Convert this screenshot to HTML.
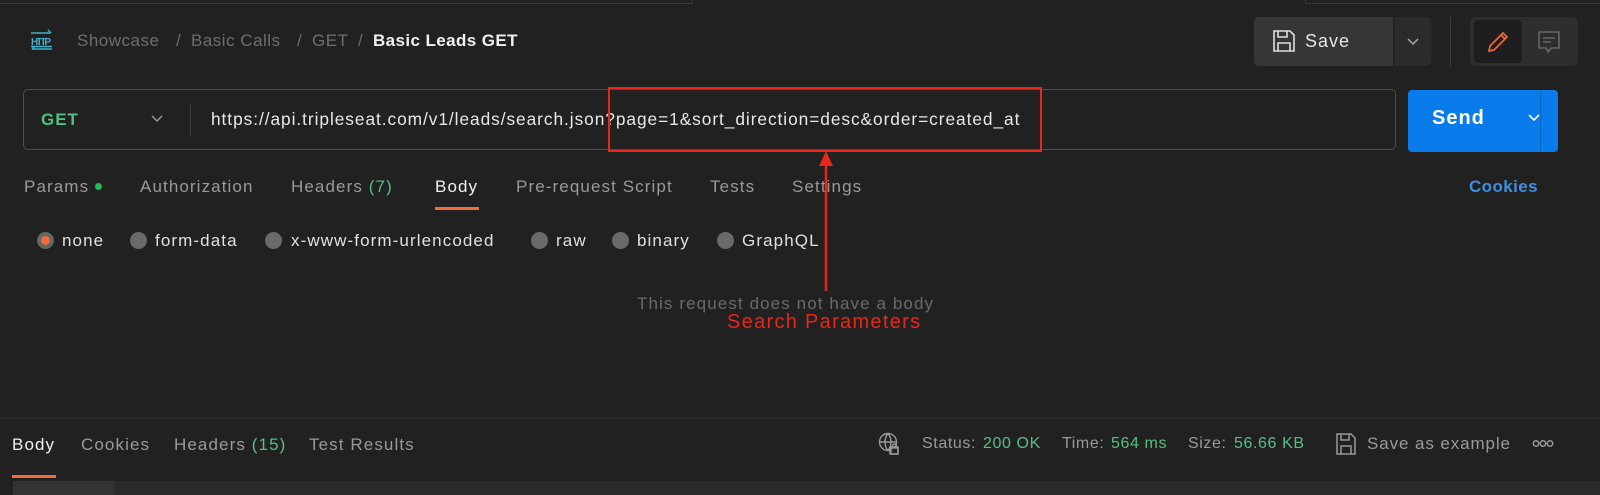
<!DOCTYPE html>
<html><head><style>
body{margin:0;width:1600px;height:495px;background:#212121;font-family:"Liberation Sans",sans-serif;position:relative;overflow:hidden;color:#a6a6a6;letter-spacing:1px}
.a{position:absolute;white-space:nowrap}
.t{font-size:17px;color:#9a9a9a;letter-spacing:1.1px}
.b{font-size:17px;color:#6e6e6e;letter-spacing:0.5px;top:31px}
.g{color:#53c083}
.s{font-size:16px;top:435px;letter-spacing:0.6px}
.radio{position:absolute;width:17px;height:17px;border-radius:50%;background:#6a6a6a}
</style></head><body>
<div class="a" style="left:0;top:0;width:692px;height:3px;border-bottom:1px solid #3a3a3a;border-right:1px solid #3a3a3a"></div>
<div class="a" style="left:1305px;top:0;width:295px;height:3px;border-bottom:1px solid #3a3a3a;border-left:1px solid #3a3a3a"></div>
<svg class="a" style="left:29px;top:29px" width="26" height="24" viewBox="0 0 26 24"><text x="2" y="16" font-size="10" font-family="Liberation Sans" font-weight="bold" fill="#3fb0c8" textLength="20" letter-spacing="0">HTTP</text><path d="M2 4H22M19 1L22 4M3 20H23M6 17L3 20M2 17.5H23" stroke="#3fb0c8" stroke-width="1.5" fill="none"/></svg>
<div class="a b" style="left:77px">Showcase</div>
<div class="a b" style="left:176px">/</div>
<div class="a b" style="left:191px">Basic Calls</div>
<div class="a b" style="left:297px">/</div>
<div class="a b" style="left:312px">GET</div>
<div class="a b" style="left:358px">/</div>
<div class="a" style="left:373px;top:31px;font-size:17px;font-weight:bold;color:#f0f0f0;letter-spacing:0.4px">Basic Leads GET</div>
<div class="a" style="left:1254px;top:17px;width:139px;height:49px;background:#363636;border-radius:5px 0 0 5px"></div>
<svg class="a" style="left:1272px;top:29px" width="24" height="24" viewBox="0 0 24 24" fill="none" stroke="#e0e0e0" stroke-width="1.6"><path d="M2 2H18L22 6V22H2Z M6 2V8H15V2 M6 22V14H18V22"/></svg>
<div class="a" style="left:1305px;top:31px;font-size:18px;color:#e6e6e6">Save</div>
<div class="a" style="left:1395px;top:17px;width:36px;height:49px;background:#2b2b2b;border-radius:0 5px 5px 0"></div>
<svg class="a" style="left:1406px;top:37px" width="14" height="10"><path d="M2 2L7 7L12 2" stroke="#aaa" stroke-width="1.5" fill="none"/></svg>
<div class="a" style="left:1450px;top:17px;width:1px;height:49px;background:#3a3a3a"></div>
<div class="a" style="left:1470px;top:17px;width:108px;height:49px;background:#2e2e2e;border-radius:5px"></div>
<div class="a" style="left:1474px;top:20px;width:48px;height:43px;background:#1e1e1e;border-radius:4px"></div>
<svg class="a" style="left:1485px;top:29px" width="26" height="26" viewBox="0 0 26 26" fill="none" stroke="#ee6a3a" stroke-width="1.7"><path d="M4 22L5 17L18 4L22 8L9 21Z M16 6L20 10"/></svg>
<svg class="a" style="left:1537px;top:30px" width="24" height="26" viewBox="0 0 24 26" fill="none" stroke="#666" stroke-width="1.6"><path d="M2 2H22V18H14L11 22L9 18H2Z M6 8H18M6 12H14"/></svg>
<div class="a" style="left:23px;top:89px;width:1371px;height:59px;border:1px solid #4e4e4e;border-radius:5px"></div>
<div class="a" style="left:41px;top:110px;font-size:17px;font-weight:bold;color:#53c083">GET</div>
<svg class="a" style="left:150px;top:114px" width="14" height="10"><path d="M2 2L7 7L12 2" stroke="#999" stroke-width="1.5" fill="none"/></svg>
<div class="a" style="left:190px;top:103px;width:1px;height:34px;background:#3c3c3c"></div>
<div class="a" style="left:211px;top:109px;font-size:17.3px;color:#e8e8e8;letter-spacing:0.95px">https://api.tripleseat.com/v1/leads/search.json?page=1&amp;sort_direction=desc&amp;order=created_at</div>
<div class="a" style="left:608px;top:87px;width:430px;height:61px;border:2px solid #e8261a"></div>
<div class="a" style="left:1408px;top:90px;width:150px;height:62px;background:#097bea;border-radius:4px"></div>
<div class="a" style="left:1540px;top:90px;width:1px;height:62px;background:#0a68c4"></div>
<div class="a" style="left:1432px;top:107px;font-size:20px;font-weight:bold;color:#fff">Send</div>
<svg class="a" style="left:1527px;top:113px" width="14" height="10"><path d="M2 2L7 7L12 2" stroke="#fff" stroke-width="1.6" fill="none"/></svg>
<div class="a t" style="left:24px;top:177px">Params</div>
<div class="a" style="left:95px;top:183px;width:7px;height:7px;border-radius:50%;background:#22bb55"></div>
<div class="a t" style="left:140px;top:177px">Authorization</div>
<div class="a t" style="left:291px;top:177px">Headers <span class="g">(7)</span></div>
<div class="a t" style="left:435px;top:177px;color:#f0f0f0">Body</div>
<div class="a" style="left:435px;top:207px;width:44px;height:3px;background:#f26b3a"></div>
<div class="a t" style="left:516px;top:177px">Pre-request Script</div>
<div class="a t" style="left:710px;top:177px">Tests</div>
<div class="a t" style="left:792px;top:177px">Settings</div>
<div class="a" style="left:1469px;top:177px;font-size:17px;font-weight:bold;color:#3d8fe0;letter-spacing:0.4px">Cookies</div>
<div class="radio" style="left:37px;top:232px;background:#666"><div style="margin:4px;width:9px;height:9px;border-radius:50%;background:#f26b3a"></div></div>
<div class="a t" style="left:62px;top:231px;color:#e0e0e0">none</div>
<div class="radio" style="left:130px;top:232px"></div><div class="a t" style="left:155px;top:231px;color:#e0e0e0">form-data</div>
<div class="radio" style="left:265px;top:232px"></div><div class="a t" style="left:291px;top:231px;color:#e0e0e0">x-www-form-urlencoded</div>
<div class="radio" style="left:531px;top:232px"></div><div class="a t" style="left:556px;top:231px;color:#e0e0e0">raw</div>
<div class="radio" style="left:612px;top:232px"></div><div class="a t" style="left:637px;top:231px;color:#e0e0e0">binary</div>
<div class="radio" style="left:717px;top:232px"></div><div class="a t" style="left:742px;top:231px;color:#e0e0e0">GraphQL</div>
<div class="a" style="left:637px;top:294px;font-size:17px;color:#6a6a6a;letter-spacing:1.1px">This request does not have a body</div>
<div class="a" style="left:727px;top:311px;font-size:20px;color:#e8261a;letter-spacing:1.3px">Search Parameters</div>
<svg class="a" style="left:816px;top:150px" width="20" height="142"><path d="M10 14V141" stroke="#e8261a" stroke-width="2.5"/><path d="M3 16L10 1L17 16Z" fill="#e8261a"/></svg>
<div class="a" style="left:0;top:417px;width:1600px;height:2px;background:#2a2a2a"></div>
<div class="a t" style="left:12px;top:435px;color:#f0f0f0">Body</div>
<div class="a" style="left:12px;top:475px;width:44px;height:3px;background:#f26b3a"></div>
<div class="a t" style="left:81px;top:435px">Cookies</div>
<div class="a t" style="left:174px;top:435px">Headers <span class="g">(15)</span></div>
<div class="a t" style="left:309px;top:435px">Test Results</div>
<svg class="a" style="left:878px;top:432px" width="22" height="24" viewBox="0 0 22 24" fill="none" stroke="#999" stroke-width="1.4"><circle cx="10" cy="10" r="8.5"/><path d="M1.5 10H18.5M10 1.5C6 6 6 14 10 18.5M10 1.5C14 6 14 14 10 18.5"/><rect x="12" y="15" width="8" height="7" fill="#212121"/><path d="M13 16V22H20V16Z M14.5 16V14A2 2 0 0 1 18.5 14V16"/></svg>
<div class="a s" style="left:922px;color:#9a9a9a">Status:</div>
<div class="a g s" style="left:983px">200 OK</div>
<div class="a s" style="left:1062px;color:#9a9a9a">Time:</div>
<div class="a g s" style="left:1111px">564 ms</div>
<div class="a s" style="left:1188px;color:#9a9a9a">Size:</div>
<div class="a g s" style="left:1234px">56.66 KB</div>
<svg class="a" style="left:1335px;top:432px" width="22" height="24" viewBox="0 0 22 24" fill="none" stroke="#999" stroke-width="1.5"><path d="M2 2H16L20 6V22H2Z M6 2V8H14V2 M6 22V14H16V22"/></svg>
<div class="a" style="left:1367px;top:434px;font-size:17px;color:#9a9a9a;letter-spacing:0.9px">Save as example</div>
<svg class="a" style="left:1532px;top:439px" width="22" height="9" fill="none" stroke="#9a9a9a" stroke-width="1.5"><circle cx="4" cy="4.5" r="2.7"/><circle cx="11" cy="4.5" r="2.7"/><circle cx="18" cy="4.5" r="2.7"/></svg>
<div class="a" style="left:13px;top:481px;width:1587px;height:14px;background:#2a2a2a;border-radius:4px 0 0 0"></div>
<div class="a" style="left:13px;top:481px;width:102px;height:14px;background:#333"></div>
</body></html>
